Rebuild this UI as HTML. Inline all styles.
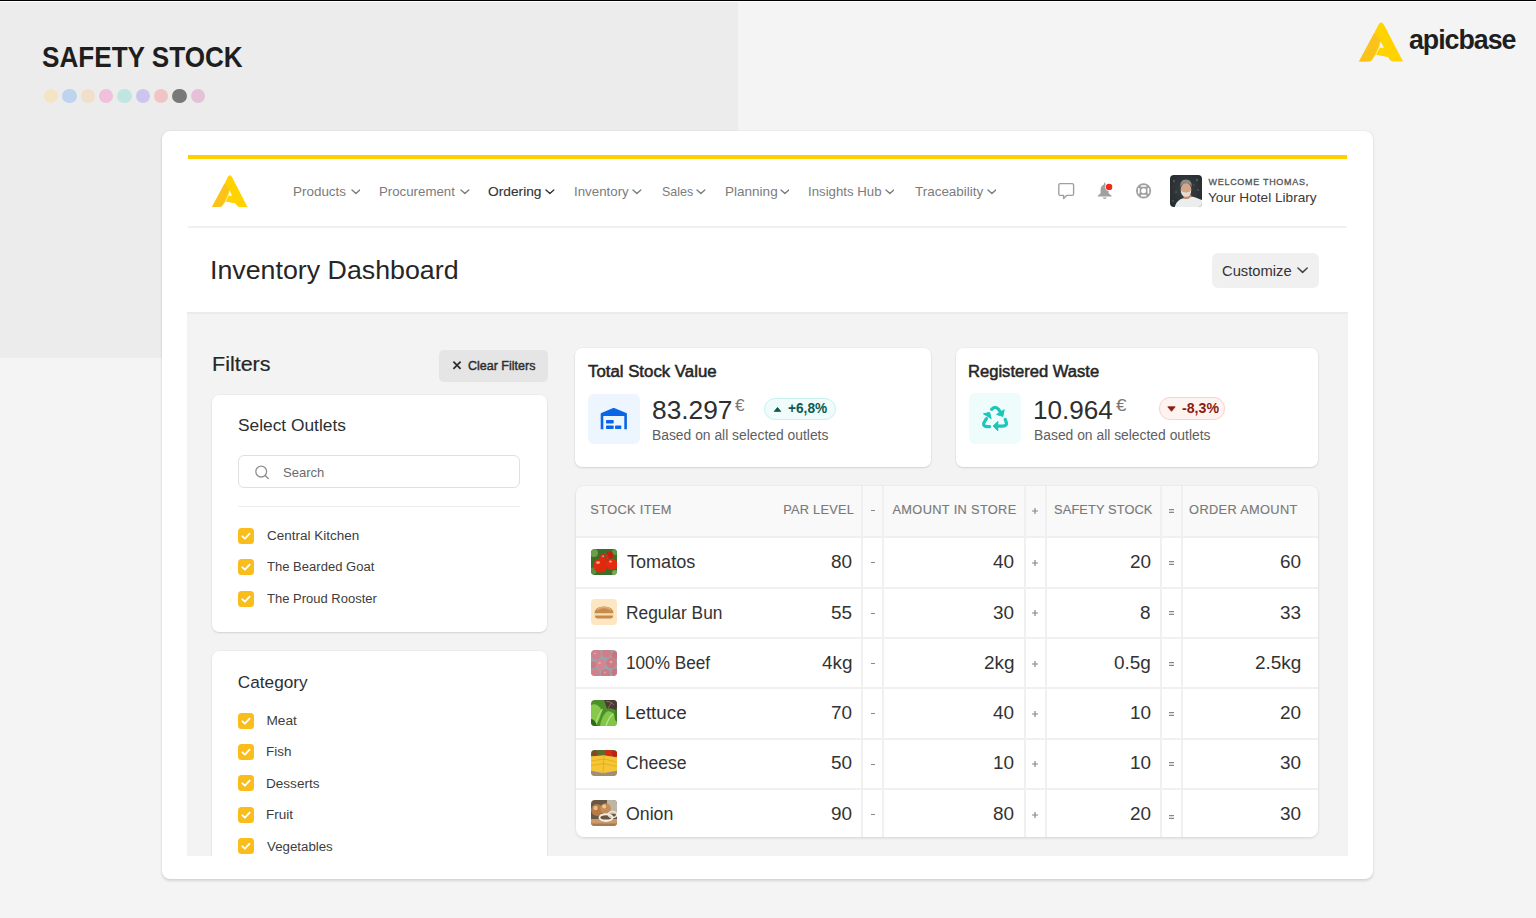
<!DOCTYPE html><html><head><meta charset="utf-8"><style>
*{margin:0;padding:0;box-sizing:border-box}
html,body{width:1536px;height:918px;overflow:hidden;background:#f4f4f4;font-family:"Liberation Sans",sans-serif}
.r{position:absolute;display:block}
.t{position:absolute;white-space:pre;line-height:1;transform-origin:0 0}
</style></head><body>
<div class="r" style="left:0px;top:0px;width:1536px;height:1px;background:#000;"></div>
<div class="r" style="left:0px;top:1px;width:1536px;height:1px;background:#fff;"></div>
<div class="r" style="left:0px;top:2px;width:738px;height:356px;background:#ececec;"></div>
<div class="t" style="left:41.52px;top:42.23px;font-size:30.09px;color:#1e1e1e;font-weight:bold;transform:scaleX(0.8682);">SAFETY STOCK</div>
<div class="r" style="left:44.00px;top:88.6px;width:14.4px;height:14.4px;border-radius:50%;background:#f3e5c2"></div>
<div class="r" style="left:62.35px;top:88.6px;width:14.4px;height:14.4px;border-radius:50%;background:#bdd3ee"></div>
<div class="r" style="left:80.70px;top:88.6px;width:14.4px;height:14.4px;border-radius:50%;background:#f0dfca"></div>
<div class="r" style="left:99.05px;top:88.6px;width:14.4px;height:14.4px;border-radius:50%;background:#f0c1dc"></div>
<div class="r" style="left:117.40px;top:88.6px;width:14.4px;height:14.4px;border-radius:50%;background:#c1e6e2"></div>
<div class="r" style="left:135.75px;top:88.6px;width:14.4px;height:14.4px;border-radius:50%;background:#cdc5ef"></div>
<div class="r" style="left:154.10px;top:88.6px;width:14.4px;height:14.4px;border-radius:50%;background:#f0c4c4"></div>
<div class="r" style="left:172.45px;top:88.6px;width:14.4px;height:14.4px;border-radius:50%;background:#7a7977"></div>
<div class="r" style="left:190.80px;top:88.6px;width:14.4px;height:14.4px;border-radius:50%;background:#e5c1d7"></div>
<svg class="r" style="left:1359px;top:22px;" width="44" height="40" viewBox="0 0 44 40"><path d="M15.4 10.7 L19.6 2.4 Q22.2 -1.6 24.8 2.4 L44 39.6 L34.5 39.6 Q32 39.6 30.6 37.6 L29.4 35.6 Q28.9 34.9 27.8 34.8 L16.9 32.6 L12.6 38.2 Q11.6 39.6 9.2 39.6 L0 39.6 Z" fill="#ffd200"/><path d="M0 39.6 L15.4 10.7 L21.2 18.2 L13.8 36.6 Q12.6 39.6 9.2 39.6 Z" fill="#fcc21c"/><path d="M16.9 32.6 L29.4 35.2" stroke="#ffd200" stroke-width="0.1"/><path d="M21.7 19.2 L19.9 25.8 L24.9 25.8 Z" fill="#f4f4f4"/><path d="M20.3 25.6 L17.2 32.4" stroke="#f4f4f4" stroke-width="0.9"/><path d="M20.6 26.6 L25.2 26.6 L27.6 34.6 L17.6 32.8 Z" fill="#ffd200"/></svg>
<div class="t" style="left:1409.00px;top:26.61px;font-size:26.80px;color:#1f1f1f;font-weight:bold;letter-spacing:-1.037px;">apicbase</div>
<div class="r" style="left:162px;top:131px;width:1211px;height:748px;background:#fff;border-radius:8px;box-shadow:0 0 1px rgba(0,0,0,0.12),0 1.5px 3px rgba(0,0,0,0.13);"></div>
<div class="r" style="left:188px;top:155px;width:1159px;height:4px;background:#ffd000;"></div>
<svg class="r" style="left:212px;top:175px;" width="35.5" height="32.3" viewBox="0 0 44 40"><path d="M15.4 10.7 L19.6 2.4 Q22.2 -1.6 24.8 2.4 L44 39.6 L34.5 39.6 Q32 39.6 30.6 37.6 L29.4 35.6 Q28.9 34.9 27.8 34.8 L16.9 32.6 L12.6 38.2 Q11.6 39.6 9.2 39.6 L0 39.6 Z" fill="#ffd200"/><path d="M0 39.6 L15.4 10.7 L21.2 18.2 L13.8 36.6 Q12.6 39.6 9.2 39.6 Z" fill="#fcc21c"/><path d="M16.9 32.6 L29.4 35.2" stroke="#ffd200" stroke-width="0.1"/><path d="M21.7 19.2 L19.9 25.8 L24.9 25.8 Z" fill="#fff"/><path d="M20.3 25.6 L17.2 32.4" stroke="#fff" stroke-width="0.9"/><path d="M20.6 26.6 L25.2 26.6 L27.6 34.6 L17.6 32.8 Z" fill="#ffd200"/></svg>
<div class="r" style="left:188px;top:226px;width:1159px;height:2px;background:#f0f0f0;"></div>
<div class="t" style="left:293.42px;top:185.38px;font-size:13.60px;color:#7c7c7c;transform:scaleX(0.9887);">Products</div>
<svg class="r" style="left:350.5px;top:189px;" width="9.8" height="6.6" viewBox="0 0 9.8 6.6"><polyline points="1,1 4.9,4.6 8.8,1" fill="none" stroke="#7c7c7c" stroke-width="1.4" stroke-linecap="round" stroke-linejoin="round"/></svg>
<div class="t" style="left:378.74px;top:185.38px;font-size:13.60px;color:#7c7c7c;transform:scaleX(0.9747);">Procurement</div>
<svg class="r" style="left:460px;top:189px;" width="9.8" height="6.6" viewBox="0 0 9.8 6.6"><polyline points="1,1 4.9,4.6 8.8,1" fill="none" stroke="#7c7c7c" stroke-width="1.4" stroke-linecap="round" stroke-linejoin="round"/></svg>
<div class="t" style="left:488.38px;top:185.38px;font-size:13.60px;color:#333;transform:scaleX(1.0115);-webkit-text-stroke:0.12px #333;">Ordering</div>
<svg class="r" style="left:545px;top:189px;" width="9.8" height="6.6" viewBox="0 0 9.8 6.6"><polyline points="1,1 4.9,4.6 8.8,1" fill="none" stroke="#333" stroke-width="1.4" stroke-linecap="round" stroke-linejoin="round"/></svg>
<div class="t" style="left:573.50px;top:185.38px;font-size:13.60px;color:#7c7c7c;transform:scaleX(0.9792);">Inventory</div>
<svg class="r" style="left:632px;top:189px;" width="9.8" height="6.6" viewBox="0 0 9.8 6.6"><polyline points="1,1 4.9,4.6 8.8,1" fill="none" stroke="#7c7c7c" stroke-width="1.4" stroke-linecap="round" stroke-linejoin="round"/></svg>
<div class="t" style="left:661.64px;top:185.38px;font-size:13.60px;color:#7c7c7c;transform:scaleX(0.9146);">Sales</div>
<svg class="r" style="left:696px;top:189px;" width="9.8" height="6.6" viewBox="0 0 9.8 6.6"><polyline points="1,1 4.9,4.6 8.8,1" fill="none" stroke="#7c7c7c" stroke-width="1.4" stroke-linecap="round" stroke-linejoin="round"/></svg>
<div class="t" style="left:724.92px;top:185.38px;font-size:13.60px;color:#7c7c7c;transform:scaleX(0.9954);">Planning</div>
<svg class="r" style="left:779.6px;top:189px;" width="9.8" height="6.6" viewBox="0 0 9.8 6.6"><polyline points="1,1 4.9,4.6 8.8,1" fill="none" stroke="#7c7c7c" stroke-width="1.4" stroke-linecap="round" stroke-linejoin="round"/></svg>
<div class="t" style="left:808.21px;top:185.38px;font-size:13.60px;color:#7c7c7c;transform:scaleX(0.9729);">Insights Hub</div>
<svg class="r" style="left:884.6px;top:189px;" width="9.8" height="6.6" viewBox="0 0 9.8 6.6"><polyline points="1,1 4.9,4.6 8.8,1" fill="none" stroke="#7c7c7c" stroke-width="1.4" stroke-linecap="round" stroke-linejoin="round"/></svg>
<div class="t" style="left:914.53px;top:185.38px;font-size:13.60px;color:#7c7c7c;transform:scaleX(0.9891);">Traceability</div>
<svg class="r" style="left:986.5px;top:189px;" width="9.8" height="6.6" viewBox="0 0 9.8 6.6"><polyline points="1,1 4.9,4.6 8.8,1" fill="none" stroke="#7c7c7c" stroke-width="1.4" stroke-linecap="round" stroke-linejoin="round"/></svg>
<svg class="r" style="left:1057px;top:182px;" width="18" height="18" viewBox="0 0 18 18"><path d="M3.2 1.6 H15.2 Q16.6 1.6 16.6 3 V12 Q16.6 13.4 15.2 13.4 H9.6 L6.6 16.4 V13.4 H3.2 Q1.8 13.4 1.8 12 V3 Q1.8 1.6 3.2 1.6 Z" fill="none" stroke="#a0a0a0" stroke-width="1.4" stroke-linejoin="round"/></svg>
<svg class="r" style="left:1096px;top:181px;" width="18" height="19" viewBox="0 0 18 19"><path d="M8 2.2 Q8 1.4 8.6 1.4 Q9.2 1.4 9.2 2.4 L9.4 3.6 C11.6 4.4 12.6 6.4 12.6 9 V12.2 L15.6 14.8 V15.4 H1.8 V14.8 L4.6 12.2 V9 C4.6 6.2 5.8 4.2 8 3.6 Z" fill="#a0a0a0"/><path d="M6.6 16.6 H10.8 Q10.4 18 8.7 18 Q7 18 6.6 16.6 Z" fill="#a0a0a0"/><circle cx="13.1" cy="5.9" r="3.9" fill="#fff"/><circle cx="13.1" cy="5.9" r="3.2" fill="#f0281e"/></svg>
<svg class="r" style="left:1135px;top:182px;" width="18" height="18" viewBox="0 0 18 18"><circle cx="8.6" cy="8.8" r="5.05" fill="none" stroke="#a0a0a0" stroke-width="5.1"/><g fill="#fff"><rect x="5.75" y="3.15" width="5.7" height="1.7" rx="0.6"/><rect x="5.75" y="12.75" width="5.7" height="1.7" rx="0.6"/><rect x="2.95" y="5.95" width="1.7" height="5.7" rx="0.6"/><rect x="12.55" y="5.95" width="1.7" height="5.7" rx="0.6"/></g></svg>
<svg class="r" style="left:1169.5px;top:174.5px;" width="32" height="32" viewBox="0 0 32 32"><defs><clipPath id="av"><rect width="32" height="32" rx="4"/></clipPath>
<radialGradient id="avbg" cx="0.5" cy="0.45" r="0.75"><stop offset="0" stop-color="#3a4045"/><stop offset="1" stop-color="#23282c"/></radialGradient></defs>
<g clip-path="url(#av)"><rect width="32" height="32" fill="url(#avbg)"/>
<g fill="#4d5459"><circle cx="4" cy="6" r="1.2"/><circle cx="27" cy="5" r="1.4"/><circle cx="6" cy="17" r="1"/><circle cx="28" cy="15" r="1.1"/><circle cx="24" cy="10" r="0.8"/><circle cx="3" cy="26" r="1"/></g>
<rect x="13.6" y="19.5" width="7.6" height="5.5" fill="#c08e72"/>
<path d="M4.6 33 C5.6 27.4 9 24.2 13.2 23.2 Q16.8 25.6 21.8 21.4 C26.4 22.6 30.6 24.4 33 25.6 V33 Z" fill="#eceeee"/>
<ellipse cx="16" cy="14.6" rx="5.3" ry="6.9" fill="#d3a68a"/>
<path d="M10.8 15.2 Q11 21.8 16 21.8 Q21 21.8 21.2 15.2 Q19.6 17.4 16 17.4 Q12.4 17.4 10.8 15.2 Z" fill="#e4ddd6"/>
<path d="M10.2 12.6 Q9.6 4.6 16 4.6 Q22.2 4.6 21.8 12.4 Q21 8.2 16 8.4 Q11.2 8.4 10.2 12.6 Z" fill="#8e8a84"/>
</g></svg>
<div class="t" style="left:1208.55px;top:177.58px;font-size:9.00px;color:#555;letter-spacing:0.699px;-webkit-text-stroke:0.3px #555;">WELCOME THOMAS,</div>
<div class="t" style="left:1208.26px;top:191.15px;font-size:13.40px;color:#3a3a3a;transform:scaleX(1.0182);">Your Hotel Library</div>
<div class="t" style="left:210.29px;top:256.89px;font-size:26.00px;color:#262626;transform:scaleX(1.0297);">Inventory Dashboard</div>
<div class="r" style="left:1212px;top:253px;width:107px;height:35px;background:#f0f0f0;border-radius:6px;"></div>
<div class="t" style="left:1221.96px;top:263.64px;font-size:14.60px;color:#333;transform:scaleX(1.0104);">Customize</div>
<svg class="r" style="left:1296.5px;top:267.4px;" width="11.2" height="7.4" viewBox="0 0 11.2 7.4"><polyline points="1,1 5.6,5.4 10.2,1" fill="none" stroke="#444" stroke-width="1.5" stroke-linecap="round" stroke-linejoin="round"/></svg>
<div class="r" style="left:187px;top:312px;width:1161px;height:544px;background:#f3f3f3;"></div>
<div class="r" style="left:187px;top:312px;width:1161px;height:2px;background:#ebebeb;"></div>
<div class="t" style="left:211.88px;top:353.59px;font-size:20.80px;color:#262626;transform:scaleX(1.0335);-webkit-text-stroke:0.2px #262626;">Filters</div>
<div class="r" style="left:438.5px;top:350px;width:109px;height:32px;background:#e5e5e5;border-radius:5px;"></div>
<svg class="r" style="left:452px;top:360px;" width="10" height="10" viewBox="0 0 10 10"><path d="M1.4 1.6 L8.6 8.8 M8.6 1.6 L1.4 8.8" stroke="#2a2a2a" stroke-width="1.7"/></svg>
<div class="t" style="left:467.67px;top:359.32px;font-size:13.20px;color:#2e2e2e;transform:scaleX(0.9482);-webkit-text-stroke:0.45px #2e2e2e;">Clear Filters</div>
<div class="r" style="left:212px;top:395px;width:335px;height:237px;background:#fff;border-radius:7px;box-shadow:0 0 0 0.5px rgba(0,0,0,0.04),0 1px 2px rgba(0,0,0,0.12);"></div>
<div class="t" style="left:237.92px;top:417.34px;font-size:17.20px;color:#2e2e2e;transform:scaleX(1.0086);">Select Outlets</div>
<div class="r" style="left:238px;top:455px;width:282px;height:32.5px;background:#fff;border:1px solid #e0e0e0;border-radius:6px;"></div>
<svg class="r" style="left:254px;top:465px;" width="17" height="17" viewBox="0 0 17 17"><circle cx="7.2" cy="6.6" r="5.4" fill="none" stroke="#8e8e8e" stroke-width="1.3"/><path d="M11.1 10.5 L14.2 13.6" stroke="#8e8e8e" stroke-width="1.4" stroke-linecap="round"/></svg>
<div class="t" style="left:282.61px;top:466.08px;font-size:13.60px;color:#6b6b6b;transform:scaleX(0.9579);">Search</div>
<div class="r" style="left:238px;top:506px;width:282px;height:1px;background:#ededed;"></div>
<svg class="r" style="left:238px;top:528.0px;" width="16" height="16" viewBox="0 0 16 16"><rect width="16" height="16" rx="3.5" fill="#fbbd1c"/><path d="M4.4 8.3 L6.9 10.7 L11.6 5.6" fill="none" stroke="#fff" stroke-width="1.8" stroke-linecap="round" stroke-linejoin="round"/></svg>
<div class="t" style="left:266.83px;top:528.80px;font-size:13.70px;color:#3d3d3d;transform:scaleX(0.9852);">Central Kitchen</div>
<svg class="r" style="left:238px;top:559.0px;" width="16" height="16" viewBox="0 0 16 16"><rect width="16" height="16" rx="3.5" fill="#fbbd1c"/><path d="M4.4 8.3 L6.9 10.7 L11.6 5.6" fill="none" stroke="#fff" stroke-width="1.8" stroke-linecap="round" stroke-linejoin="round"/></svg>
<div class="t" style="left:267.24px;top:560.15px;font-size:13.70px;color:#3d3d3d;transform:scaleX(0.9525);">The Bearded Goat</div>
<svg class="r" style="left:238px;top:590.5px;" width="16" height="16" viewBox="0 0 16 16"><rect width="16" height="16" rx="3.5" fill="#fbbd1c"/><path d="M4.4 8.3 L6.9 10.7 L11.6 5.6" fill="none" stroke="#fff" stroke-width="1.8" stroke-linecap="round" stroke-linejoin="round"/></svg>
<div class="t" style="left:267.24px;top:591.50px;font-size:13.70px;color:#3d3d3d;transform:scaleX(0.9495);">The Proud Rooster</div>
<div class="r" style="left:212px;top:651px;width:335px;height:205px;background:#fff;border-radius:7px;box-shadow:0 0 0 0.5px rgba(0,0,0,0.04),0 1px 2px rgba(0,0,0,0.12);border-bottom-left-radius:0;border-bottom-right-radius:0;"></div>
<div class="t" style="left:237.84px;top:673.84px;font-size:17.20px;color:#2e2e2e;">Category</div>
<svg class="r" style="left:238px;top:712.5px;" width="16" height="16" viewBox="0 0 16 16"><rect width="16" height="16" rx="3.5" fill="#fbbd1c"/><path d="M4.4 8.3 L6.9 10.7 L11.6 5.6" fill="none" stroke="#fff" stroke-width="1.8" stroke-linecap="round" stroke-linejoin="round"/></svg>
<div class="t" style="left:266.41px;top:713.50px;font-size:13.70px;color:#3d3d3d;">Meat</div>
<svg class="r" style="left:238px;top:744.0px;" width="16" height="16" viewBox="0 0 16 16"><rect width="16" height="16" rx="3.5" fill="#fbbd1c"/><path d="M4.4 8.3 L6.9 10.7 L11.6 5.6" fill="none" stroke="#fff" stroke-width="1.8" stroke-linecap="round" stroke-linejoin="round"/></svg>
<div class="t" style="left:266.42px;top:745.00px;font-size:13.70px;color:#3d3d3d;transform:scaleX(0.9830);">Fish</div>
<svg class="r" style="left:238px;top:775.0px;" width="16" height="16" viewBox="0 0 16 16"><rect width="16" height="16" rx="3.5" fill="#fbbd1c"/><path d="M4.4 8.3 L6.9 10.7 L11.6 5.6" fill="none" stroke="#fff" stroke-width="1.8" stroke-linecap="round" stroke-linejoin="round"/></svg>
<div class="t" style="left:266.41px;top:776.50px;font-size:13.70px;color:#3d3d3d;transform:scaleX(0.9910);">Desserts</div>
<svg class="r" style="left:238px;top:806.5px;" width="16" height="16" viewBox="0 0 16 16"><rect width="16" height="16" rx="3.5" fill="#fbbd1c"/><path d="M4.4 8.3 L6.9 10.7 L11.6 5.6" fill="none" stroke="#fff" stroke-width="1.8" stroke-linecap="round" stroke-linejoin="round"/></svg>
<div class="t" style="left:266.42px;top:808.00px;font-size:13.70px;color:#3d3d3d;transform:scaleX(0.9860);">Fruit</div>
<svg class="r" style="left:238px;top:837.5px;" width="16" height="16" viewBox="0 0 16 16"><rect width="16" height="16" rx="3.5" fill="#fbbd1c"/><path d="M4.4 8.3 L6.9 10.7 L11.6 5.6" fill="none" stroke="#fff" stroke-width="1.8" stroke-linecap="round" stroke-linejoin="round"/></svg>
<div class="t" style="left:267.43px;top:839.50px;font-size:13.70px;color:#3d3d3d;transform:scaleX(0.9708);">Vegetables</div>
<div class="r" style="left:200px;top:856px;width:360px;height:16px;background:#fff;"></div>
<div class="r" style="left:575px;top:348px;width:356px;height:119px;background:#fff;border-radius:7px;box-shadow:0 0 0 0.5px rgba(0,0,0,0.04),0 1px 2px rgba(0,0,0,0.12);"></div>
<div class="t" style="left:587.86px;top:363.79px;font-size:15.60px;color:#262626;transform:scaleX(1.0775);-webkit-text-stroke:0.5px #262626;">Total Stock Value</div>
<div class="r" style="left:588px;top:394px;width:52px;height:50px;background:#edf5ff;border-radius:6px;"></div>
<svg class="r" style="left:600px;top:407px;" width="28" height="24" viewBox="0 0 28 24"><path d="M0.7 6.9 Q0.7 6.3 1.3 6 L13.2 1 Q13.7 0.8 14.2 1 L26.2 6 Q26.9 6.3 26.9 6.9 V22.3 H24.3 V9 H3.3 V22.3 H0.7 Z" fill="#0a66e6"/><rect x="6" y="13.1" width="7.7" height="3.5" rx="0.8" fill="#0a66e6"/><rect x="6" y="18.5" width="7.7" height="3.6" rx="0.8" fill="#0a66e6"/><rect x="15" y="18.5" width="6.3" height="3.6" rx="0.8" fill="#0a66e6"/></svg>
<div class="t" style="left:652.02px;top:397.39px;font-size:26.00px;color:#2e2e2e;transform:scaleX(1.0118);">83.297</div>
<div class="t" style="left:735.43px;top:397.75px;font-size:16.00px;color:#777;transform:scaleX(1.0731);">€</div>
<div class="t" style="left:652.09px;top:429.32px;font-size:13.80px;color:#606060;transform:scaleX(1.0041);">Based on all selected outlets</div>
<div class="r" style="left:764.4px;top:398.2px;width:71.5px;height:22.3px;background:#effcfb;border:1px solid #c6f3ef;border-radius:11px;"></div>
<svg class="r" style="left:773px;top:406px;" width="9" height="6" viewBox="0 0 9 6"><path d="M1.2 5.4 L4.5 1.4 L7.8 5.4 Z" fill="#0b5a52" stroke="#0b5a52" stroke-width="0.8" stroke-linejoin="round"/></svg>
<div class="t" style="left:788.45px;top:402.32px;font-size:13.80px;color:#0b5a52;font-weight:bold;transform:scaleX(0.9912);">+6,8%</div>
<div class="r" style="left:956px;top:348px;width:362px;height:119px;background:#fff;border-radius:7px;box-shadow:0 0 0 0.5px rgba(0,0,0,0.04),0 1px 2px rgba(0,0,0,0.12);"></div>
<div class="t" style="left:967.97px;top:363.79px;font-size:15.60px;color:#262626;transform:scaleX(1.0630);-webkit-text-stroke:0.5px #262626;">Registered Waste</div>
<div class="r" style="left:969px;top:393px;width:52px;height:51px;background:#eefcfc;border-radius:6px;"></div>
<svg class="r" style="left:982px;top:405px;" width="27" height="28" viewBox="0 0 27 28"><g fill="none" stroke="#1cc6ba" stroke-width="3.2" stroke-linecap="round">
<path d="M9.6 4.4 Q13 0.4 16.6 4.4 L18.4 7.2"/>
<path d="M4.4 13.6 L1.9 17.8 Q0.8 21.4 5 21.6 L7.6 21.6"/>
<path d="M23.2 14.4 L24.4 17.6 Q25 21 20.8 21.2 L15.4 21.2"/>
</g>
<g fill="#1cc6ba"><path d="M22.2 4.8 L20.8 11.4 L14.6 9.4 Z" stroke="#1cc6ba" stroke-width="1" stroke-linejoin="round"/>
<path d="M1.4 8.8 L7.6 7.4 L9.2 13.6 Z" stroke="#1cc6ba" stroke-width="1" stroke-linejoin="round"/>
<path d="M11.2 21 L15.8 16.4 L15.8 25.8 Z" stroke="#1cc6ba" stroke-width="1" stroke-linejoin="round"/></g></svg>
<div class="t" style="left:1032.94px;top:397.39px;font-size:26.00px;color:#2e2e2e;transform:scaleX(1.0035);">10.964</div>
<div class="t" style="left:1115.81px;top:397.75px;font-size:16.00px;color:#777;transform:scaleX(1.1792);">€</div>
<div class="t" style="left:1033.79px;top:429.32px;font-size:13.80px;color:#606060;transform:scaleX(1.0047);">Based on all selected outlets</div>
<div class="r" style="left:1159.4px;top:397px;width:65.6px;height:22.6px;background:#fff3f2;border:1px solid #fbd0cd;border-radius:11px;"></div>
<svg class="r" style="left:1167px;top:405.5px;" width="9" height="6" viewBox="0 0 9 6"><path d="M0.8 0.8 L4.5 5.3 L8.2 0.8 Z" fill="#8a1c0e" stroke="#8a1c0e" stroke-width="0.8" stroke-linejoin="round"/></svg>
<div class="t" style="left:1181.53px;top:401.52px;font-size:13.80px;color:#8a1c0e;font-weight:bold;transform:scaleX(1.0259);">-8,3%</div>
<div class="r" style="left:576px;top:486px;width:741.5px;height:351px;border-radius:8px;overflow:hidden;background:#f0f0f0;box-shadow:0 0 1px rgba(0,0,0,0.08),0 1px 3px rgba(0,0,0,0.12);">
<div class="r" style="left:0px;top:0px;width:285px;height:50px;background:#f9f9f9"></div>
<div class="r" style="left:287px;top:0px;width:19px;height:50px;background:#f9f9f9"></div>
<div class="r" style="left:308px;top:0px;width:140px;height:50px;background:#f9f9f9"></div>
<div class="r" style="left:450px;top:0px;width:19px;height:50px;background:#f9f9f9"></div>
<div class="r" style="left:471px;top:0px;width:113px;height:50px;background:#f9f9f9"></div>
<div class="r" style="left:586px;top:0px;width:19px;height:50px;background:#f9f9f9"></div>
<div class="r" style="left:607px;top:0px;width:134.5px;height:50px;background:#f9f9f9"></div>
<div class="r" style="left:0px;top:52px;width:285px;height:49px;background:#ffffff"></div>
<div class="r" style="left:287px;top:52px;width:19px;height:49px;background:#ffffff"></div>
<div class="r" style="left:308px;top:52px;width:140px;height:49px;background:#ffffff"></div>
<div class="r" style="left:450px;top:52px;width:19px;height:49px;background:#ffffff"></div>
<div class="r" style="left:471px;top:52px;width:113px;height:49px;background:#ffffff"></div>
<div class="r" style="left:586px;top:52px;width:19px;height:49px;background:#ffffff"></div>
<div class="r" style="left:607px;top:52px;width:134.5px;height:49px;background:#ffffff"></div>
<div class="r" style="left:0px;top:103px;width:285px;height:48px;background:#ffffff"></div>
<div class="r" style="left:287px;top:103px;width:19px;height:48px;background:#ffffff"></div>
<div class="r" style="left:308px;top:103px;width:140px;height:48px;background:#ffffff"></div>
<div class="r" style="left:450px;top:103px;width:19px;height:48px;background:#ffffff"></div>
<div class="r" style="left:471px;top:103px;width:113px;height:48px;background:#ffffff"></div>
<div class="r" style="left:586px;top:103px;width:19px;height:48px;background:#ffffff"></div>
<div class="r" style="left:607px;top:103px;width:134.5px;height:48px;background:#ffffff"></div>
<div class="r" style="left:0px;top:153px;width:285px;height:48px;background:#ffffff"></div>
<div class="r" style="left:287px;top:153px;width:19px;height:48px;background:#ffffff"></div>
<div class="r" style="left:308px;top:153px;width:140px;height:48px;background:#ffffff"></div>
<div class="r" style="left:450px;top:153px;width:19px;height:48px;background:#ffffff"></div>
<div class="r" style="left:471px;top:153px;width:113px;height:48px;background:#ffffff"></div>
<div class="r" style="left:586px;top:153px;width:19px;height:48px;background:#ffffff"></div>
<div class="r" style="left:607px;top:153px;width:134.5px;height:48px;background:#ffffff"></div>
<div class="r" style="left:0px;top:203px;width:285px;height:49px;background:#ffffff"></div>
<div class="r" style="left:287px;top:203px;width:19px;height:49px;background:#ffffff"></div>
<div class="r" style="left:308px;top:203px;width:140px;height:49px;background:#ffffff"></div>
<div class="r" style="left:450px;top:203px;width:19px;height:49px;background:#ffffff"></div>
<div class="r" style="left:471px;top:203px;width:113px;height:49px;background:#ffffff"></div>
<div class="r" style="left:586px;top:203px;width:19px;height:49px;background:#ffffff"></div>
<div class="r" style="left:607px;top:203px;width:134.5px;height:49px;background:#ffffff"></div>
<div class="r" style="left:0px;top:254px;width:285px;height:48px;background:#ffffff"></div>
<div class="r" style="left:287px;top:254px;width:19px;height:48px;background:#ffffff"></div>
<div class="r" style="left:308px;top:254px;width:140px;height:48px;background:#ffffff"></div>
<div class="r" style="left:450px;top:254px;width:19px;height:48px;background:#ffffff"></div>
<div class="r" style="left:471px;top:254px;width:113px;height:48px;background:#ffffff"></div>
<div class="r" style="left:586px;top:254px;width:19px;height:48px;background:#ffffff"></div>
<div class="r" style="left:607px;top:254px;width:134.5px;height:48px;background:#ffffff"></div>
<div class="r" style="left:0px;top:304px;width:285px;height:47px;background:#ffffff"></div>
<div class="r" style="left:287px;top:304px;width:19px;height:47px;background:#ffffff"></div>
<div class="r" style="left:308px;top:304px;width:140px;height:47px;background:#ffffff"></div>
<div class="r" style="left:450px;top:304px;width:19px;height:47px;background:#ffffff"></div>
<div class="r" style="left:471px;top:304px;width:113px;height:47px;background:#ffffff"></div>
<div class="r" style="left:586px;top:304px;width:19px;height:47px;background:#ffffff"></div>
<div class="r" style="left:607px;top:304px;width:134.5px;height:47px;background:#ffffff"></div>
</div>
<div class="t" style="left:590.32px;top:503.76px;font-size:12.80px;color:#7a7a7a;letter-spacing:0.350px;-webkit-text-stroke:0.15px #7a7a7a;">STOCK ITEM</div>
<div class="t" style="left:783.18px;top:503.76px;font-size:12.80px;color:#7a7a7a;letter-spacing:0.246px;-webkit-text-stroke:0.15px #7a7a7a;">PAR LEVEL</div>
<div class="t" style="left:892.50px;top:503.76px;font-size:12.80px;color:#7a7a7a;letter-spacing:0.338px;-webkit-text-stroke:0.15px #7a7a7a;">AMOUNT IN STORE</div>
<div class="t" style="left:1054.12px;top:503.76px;font-size:12.80px;color:#7a7a7a;letter-spacing:0.122px;-webkit-text-stroke:0.15px #7a7a7a;">SAFETY STOCK</div>
<div class="t" style="left:1189.12px;top:503.76px;font-size:12.80px;color:#7a7a7a;letter-spacing:0.338px;-webkit-text-stroke:0.15px #7a7a7a;">ORDER AMOUNT</div>
<div class="r" style="left:871px;top:510px;width:4px;height:1px;background:#888;"></div>
<svg class="r" style="left:1032.4px;top:507.5px;" width="6" height="6" viewBox="0 0 6 6"><path d="M3.0 0 V6 M0 3.0 H6" stroke="#888" stroke-width="1.2"/></svg>
<svg class="r" style="left:1169.0px;top:508.5px;" width="5" height="4" viewBox="0 0 5 4"><path d="M0 0.6 H5 M0 3.4 H5" stroke="#888" stroke-width="1.2"/></svg>
<div class="t" style="left:626.54px;top:554.20px;font-size:17.60px;color:#333;transform:scaleX(1.0265);">Tomatos</div>
<div class="t" style="left:830.75px;top:554.20px;font-size:17.60px;color:#333;transform:scaleX(1.0757);">80</div>
<div class="t" style="left:992.95px;top:554.20px;font-size:17.60px;color:#333;transform:scaleX(1.0757);">40</div>
<div class="t" style="left:1129.65px;top:554.20px;font-size:17.60px;color:#333;transform:scaleX(1.0757);">20</div>
<div class="t" style="left:1279.65px;top:554.20px;font-size:17.60px;color:#333;transform:scaleX(1.0757);">60</div>
<div class="r" style="left:871px;top:562px;width:4px;height:1px;background:#888;"></div>
<svg class="r" style="left:1032.4px;top:560.0px;" width="6" height="6" viewBox="0 0 6 6"><path d="M3.0 0 V6 M0 3.0 H6" stroke="#888" stroke-width="1.2"/></svg>
<svg class="r" style="left:1169.0px;top:561.0px;" width="5" height="4" viewBox="0 0 5 4"><path d="M0 0.6 H5 M0 3.4 H5" stroke="#888" stroke-width="1.2"/></svg>
<div class="t" style="left:625.51px;top:604.50px;font-size:17.60px;color:#333;transform:scaleX(0.9863);">Regular Bun</div>
<div class="t" style="left:830.84px;top:604.50px;font-size:17.60px;color:#333;transform:scaleX(1.0757);">55</div>
<div class="t" style="left:992.95px;top:604.50px;font-size:17.60px;color:#333;transform:scaleX(1.0757);">30</div>
<div class="t" style="left:1140.25px;top:604.50px;font-size:17.60px;color:#333;transform:scaleX(1.0757);">8</div>
<div class="t" style="left:1279.74px;top:604.50px;font-size:17.60px;color:#333;transform:scaleX(1.0757);">33</div>
<div class="r" style="left:871px;top:613px;width:4px;height:1px;background:#888;"></div>
<svg class="r" style="left:1032.4px;top:610.3px;" width="6" height="6" viewBox="0 0 6 6"><path d="M3.0 0 V6 M0 3.0 H6" stroke="#888" stroke-width="1.2"/></svg>
<svg class="r" style="left:1169.0px;top:611.3px;" width="5" height="4" viewBox="0 0 5 4"><path d="M0 0.6 H5 M0 3.4 H5" stroke="#888" stroke-width="1.2"/></svg>
<div class="t" style="left:625.61px;top:654.80px;font-size:17.60px;color:#333;transform:scaleX(0.9772);">100% Beef</div>
<div class="t" style="left:821.85px;top:654.80px;font-size:17.60px;color:#333;transform:scaleX(1.0757);">4kg</div>
<div class="t" style="left:984.05px;top:654.80px;font-size:17.60px;color:#333;transform:scaleX(1.0757);">2kg</div>
<div class="t" style="left:1114.41px;top:654.80px;font-size:17.60px;color:#333;transform:scaleX(1.0757);">0.5g</div>
<div class="t" style="left:1254.94px;top:654.80px;font-size:17.60px;color:#333;transform:scaleX(1.0757);">2.5kg</div>
<div class="r" style="left:871px;top:663px;width:4px;height:1px;background:#888;"></div>
<svg class="r" style="left:1032.4px;top:660.6px;" width="6" height="6" viewBox="0 0 6 6"><path d="M3.0 0 V6 M0 3.0 H6" stroke="#888" stroke-width="1.2"/></svg>
<svg class="r" style="left:1169.0px;top:661.6px;" width="5" height="4" viewBox="0 0 5 4"><path d="M0 0.6 H5 M0 3.4 H5" stroke="#888" stroke-width="1.2"/></svg>
<div class="t" style="left:625.40px;top:705.10px;font-size:17.60px;color:#333;transform:scaleX(1.0679);">Lettuce</div>
<div class="t" style="left:830.75px;top:705.10px;font-size:17.60px;color:#333;transform:scaleX(1.0757);">70</div>
<div class="t" style="left:992.95px;top:705.10px;font-size:17.60px;color:#333;transform:scaleX(1.0757);">40</div>
<div class="t" style="left:1129.65px;top:705.10px;font-size:17.60px;color:#333;transform:scaleX(1.0757);">10</div>
<div class="t" style="left:1279.65px;top:705.10px;font-size:17.60px;color:#333;transform:scaleX(1.0757);">20</div>
<div class="r" style="left:871px;top:713px;width:4px;height:1px;background:#888;"></div>
<svg class="r" style="left:1032.4px;top:710.9px;" width="6" height="6" viewBox="0 0 6 6"><path d="M3.0 0 V6 M0 3.0 H6" stroke="#888" stroke-width="1.2"/></svg>
<svg class="r" style="left:1169.0px;top:711.9px;" width="5" height="4" viewBox="0 0 5 4"><path d="M0 0.6 H5 M0 3.4 H5" stroke="#888" stroke-width="1.2"/></svg>
<div class="t" style="left:626.02px;top:755.40px;font-size:17.60px;color:#333;">Cheese</div>
<div class="t" style="left:830.75px;top:755.40px;font-size:17.60px;color:#333;transform:scaleX(1.0757);">50</div>
<div class="t" style="left:992.95px;top:755.40px;font-size:17.60px;color:#333;transform:scaleX(1.0757);">10</div>
<div class="t" style="left:1129.65px;top:755.40px;font-size:17.60px;color:#333;transform:scaleX(1.0757);">10</div>
<div class="t" style="left:1279.65px;top:755.40px;font-size:17.60px;color:#333;transform:scaleX(1.0757);">30</div>
<div class="r" style="left:871px;top:764px;width:4px;height:1px;background:#888;"></div>
<svg class="r" style="left:1032.4px;top:761.2px;" width="6" height="6" viewBox="0 0 6 6"><path d="M3.0 0 V6 M0 3.0 H6" stroke="#888" stroke-width="1.2"/></svg>
<svg class="r" style="left:1169.0px;top:762.2px;" width="5" height="4" viewBox="0 0 5 4"><path d="M0 0.6 H5 M0 3.4 H5" stroke="#888" stroke-width="1.2"/></svg>
<div class="t" style="left:626.10px;top:805.70px;font-size:17.60px;color:#333;transform:scaleX(1.0074);">Onion</div>
<div class="t" style="left:830.75px;top:805.70px;font-size:17.60px;color:#333;transform:scaleX(1.0757);">90</div>
<div class="t" style="left:992.95px;top:805.70px;font-size:17.60px;color:#333;transform:scaleX(1.0757);">80</div>
<div class="t" style="left:1129.65px;top:805.70px;font-size:17.60px;color:#333;transform:scaleX(1.0757);">20</div>
<div class="t" style="left:1279.65px;top:805.70px;font-size:17.60px;color:#333;transform:scaleX(1.0757);">30</div>
<div class="r" style="left:871px;top:814px;width:4px;height:1px;background:#888;"></div>
<svg class="r" style="left:1032.4px;top:811.5px;" width="6" height="6" viewBox="0 0 6 6"><path d="M3.0 0 V6 M0 3.0 H6" stroke="#888" stroke-width="1.2"/></svg>
<svg class="r" style="left:1169.0px;top:815.0px;" width="5" height="4" viewBox="0 0 5 4"><path d="M0 0.6 H5 M0 3.4 H5" stroke="#888" stroke-width="1.2"/></svg>
<svg class="r" style="left:591px;top:549.0px;" width="26" height="26" viewBox="0 0 26 26"><defs><clipPath id="fc0"><rect width="26" height="26" rx="4"/></clipPath></defs><g clip-path="url(#fc0)"><rect width="26" height="26" fill="#3b6e2a"/>
<circle cx="3" cy="4" r="4" fill="#6a9e48"/><circle cx="24" cy="3" r="3" fill="#5d9440"/><circle cx="2" cy="22" r="3.5" fill="#5a8f3e"/><circle cx="24" cy="24" r="3" fill="#7aa854"/>
<circle cx="18.6" cy="6" r="3.6" fill="#c41d10"/><circle cx="13.4" cy="8.6" r="4.4" fill="#dc2a14"/>
<circle cx="9.4" cy="16.6" r="7" fill="#e1290f"/><circle cx="21" cy="15.2" r="5.6" fill="#e62b12"/>
<ellipse cx="7" cy="13.6" rx="2" ry="1.4" fill="#ff9a84"/><ellipse cx="19.5" cy="12.6" rx="1.6" ry="1.1" fill="#ff9a84"/><circle cx="12.2" cy="7.2" r="1" fill="#ff9a84"/>
<path d="M12 4.5 L15.4 10.8 M15 6 L19 3.6" stroke="#3d6a2a" stroke-width="0.9" fill="none"/></g></svg>
<svg class="r" style="left:591px;top:599.0px;" width="26" height="26" viewBox="0 0 26 26"><defs><clipPath id="fc1"><rect width="26" height="26" rx="4"/></clipPath></defs><g clip-path="url(#fc1)"><rect width="26" height="26" fill="#fde6c2"/>
<path d="M3.6 14.6 Q3.6 7.4 13 7.4 Q22.4 7.4 22.4 14.6 Z" fill="#c98b4b"/>
<path d="M6 11 Q8.6 8.4 13 8.3 Q17.4 8.4 20 11" stroke="#ddb07a" stroke-width="1.5" fill="none"/>
<rect x="3.4" y="14.4" width="19.2" height="2.4" rx="1" fill="#f4dfb4"/>
<path d="M3.8 16.6 H22.2 Q22 19.4 19.4 19.6 H6.6 Q4 19.4 3.8 16.6 Z" fill="#c98a48"/></g></svg>
<svg class="r" style="left:591px;top:649.5px;" width="26" height="26" viewBox="0 0 26 26"><defs><clipPath id="fc2"><rect width="26" height="26" rx="4"/></clipPath></defs><g clip-path="url(#fc2)"><rect width="26" height="26" fill="#9aa2ad"/>
<circle cx="5" cy="4.5" r="5" fill="#d0828a"/><circle cx="15.5" cy="3" r="4.5" fill="#cf7e88"/><circle cx="24.5" cy="5" r="3.8" fill="#c77680"/>
<circle cx="9.5" cy="14" r="5.2" fill="#d38690"/><circle cx="20.5" cy="13" r="5.4" fill="#cd7c86"/><circle cx="1.5" cy="15" r="3.4" fill="#c97a83"/>
<circle cx="4.5" cy="23.5" r="4.6" fill="#d0828b"/><circle cx="14.5" cy="23.5" r="4.6" fill="#cb7c85"/><circle cx="24.5" cy="22.5" r="4" fill="#c77780"/>
<g fill="#e3a3aa"><circle cx="8.5" cy="13" r="1.3"/><circle cx="20" cy="12" r="1.3"/><circle cx="4" cy="3.5" r="1"/><circle cx="14" cy="22.5" r="1"/></g></g></svg>
<svg class="r" style="left:591px;top:699.5px;" width="26" height="26" viewBox="0 0 26 26"><defs><clipPath id="fc3"><rect width="26" height="26" rx="4"/></clipPath></defs><g clip-path="url(#fc3)"><rect width="26" height="26" fill="#4e8f2c"/>
<path d="M13 0 H26 V11 Q21 7 16 8.6 Z" fill="#4a3a36"/><path d="M15 1.6 Q19 0.4 23 5 M17 8 L21 2" stroke="#8a6a5a" stroke-width="1" fill="none"/>
<path d="M0 5 Q7 2 11 11 Q9 19 5 26 H0 Z" fill="#86c94c"/><path d="M9 26 Q11 14 17 11 Q24 12 26 19 V26 Z" fill="#82c649"/>
<path d="M4 26 Q7 15 11.5 9" stroke="#b5e27d" stroke-width="1.2" fill="none"/><path d="M15 26 Q17.5 17.5 22 14" stroke="#bce584" stroke-width="1.2" fill="none"/>
<path d="M0 19 Q4 19 6 26 H0 Z" fill="#2f6a1a"/><path d="M26 8 Q22 12 24 20 L26 22 Z" fill="#3e7a22"/></g></svg>
<svg class="r" style="left:591px;top:750.0px;" width="26" height="26" viewBox="0 0 26 26"><defs><clipPath id="fc4"><rect width="26" height="26" rx="4"/></clipPath></defs><g clip-path="url(#fc4)"><rect width="26" height="26" fill="#b3a08a"/>
<rect width="26" height="6.5" fill="#5d6b33"/><circle cx="17.5" cy="3" r="3.6" fill="#d42a12"/><circle cx="24" cy="3.8" r="3.2" fill="#c42010"/><circle cx="3.5" cy="3.2" r="2.6" fill="#7a4a20"/>
<path d="M0 6.5 L13 5.2 L26 7.5 L26 20.5 L12 23 L0 20.5 Z" fill="#f6c534"/>
<path d="M0 11 L13 9 L26 12 M0 15.5 L13 13.5 L26 16.5 M13 5.2 L12 23" stroke="#e0a91d" stroke-width="0.8" fill="none"/>
<path d="M0 21 L12 23.6 L26 21 V26 H0 Z" fill="#a18c74"/></g></svg>
<svg class="r" style="left:591px;top:800.0px;" width="26" height="26" viewBox="0 0 26 26"><defs><clipPath id="fc5"><rect width="26" height="26" rx="4"/></clipPath></defs><g clip-path="url(#fc5)"><rect width="26" height="26" fill="#6a5644"/>
<rect x="16" y="0" width="10" height="14" fill="#bfb5a5"/>
<rect y="19" width="26" height="7" fill="#c99a6c"/><rect y="23.5" width="26" height="2.5" fill="#a87a52"/>
<circle cx="6" cy="10" r="6" fill="#b57a45"/><circle cx="14.5" cy="8.6" r="5.4" fill="#c68c56"/>
<circle cx="4.6" cy="8" r="2.2" fill="#e3bd8c"/><circle cx="13.2" cy="6.6" r="2" fill="#ebc898"/>
<ellipse cx="15" cy="17.6" rx="6.6" ry="3.4" fill="none" stroke="#f5efe4" stroke-width="1.9"/><ellipse cx="21.5" cy="14.5" rx="4.2" ry="3" fill="none" stroke="#efe8dc" stroke-width="1.6"/></g></svg>
</body></html>
